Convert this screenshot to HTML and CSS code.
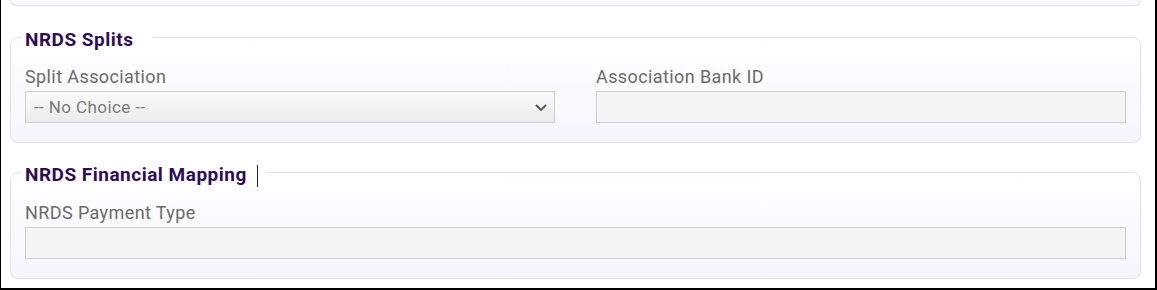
FILE: index.html
```html
<!DOCTYPE html>
<html lang="en">
<head>
  <meta charset="UTF-8" />
  <title>NRDS Settings</title>
  <link rel="stylesheet" href="styles.css">
</head>
<body>
  <div class="frame">
    <div class="card-tail"></div>

    <fieldset class="group">
      <legend>NRDS Splits<span class="caret hidden"></span></legend>
      <div class="row two">
        <div class="field">
          <label for="splitAssoc">Split Association</label>
          <div class="select-wrap">
            <select id="splitAssoc">
              <option>-- No Choice --</option>
            </select>
            <svg class="chevron" width="12" height="7" viewBox="0 0 12 7">
              <path d="M1 1l5 5 5-5" fill="none" stroke="#555" stroke-width="1.8" />
            </svg>
          </div>
        </div>
        <div class="field">
          <label for="bankId">Association Bank ID</label>
          <input type="text" id="bankId" disabled />
        </div>
      </div>
    </fieldset>

    <fieldset class="group second">
      <legend>NRDS Financial Mapping<span class="caret"></span></legend>
      <div class="row">
        <div class="field">
          <label for="paymentType">NRDS Payment Type</label>
          <input type="text" id="paymentType" disabled />
        </div>
      </div>
    </fieldset>
  </div>
</body>
</html>
```

FILE: styles.css
```css
* { box-sizing: border-box; }
html, body {
  margin: 0;
  padding: 0;
  background: #fff;
  font-family: Roboto, "Liberation Sans", Arial, sans-serif;
}
.frame {
  width: 1157px;
  height: 290px;
  border-left: 1px solid #000;
  border-right: 2px solid #000;
  border-bottom: 2px solid #000;
  padding: 0 14px 0 9px;
  overflow: hidden;
}
.card-tail {
  height: 6px;
  border: 1px solid #e2e0ea;
  border-top: none;
  border-radius: 0 0 8px 8px;
  background: #f8f7fd;
  margin-bottom: 19px;
}
.group {
  margin: 0;
  padding: 17px 14px 19px;
  border: 1px solid #e2e0ea;
  border-radius: 8px;
  background: linear-gradient(#ffffff, #f6f5fd);
  min-width: 0;
}
.group.second {
  margin-top: 17px;
  padding-top: 18px;
}
.group legend {
  margin-left: -3px;
  padding: 5px 0 0 3px;
  line-height: 20px;
  font-size: 19px;
  letter-spacing: 0.5px;
  font-weight: bold;
  color: #2d0c5c;
}
.caret {
  display: inline-block;
  vertical-align: top;
  width: 1px;
  height: 22px;
  margin: 0 8px -2px 10px;
  background: #222;
}
.caret.hidden { visibility: hidden; }
.row.two {
  display: grid;
  grid-template-columns: 1fr 1fr;
  column-gap: 41px;
}
.field label {
  display: block;
  font-size: 18px;
  letter-spacing: 0.4px;
  line-height: 20px;
  color: #6b6b6b;
  margin-bottom: 4px;
}
.select-wrap {
  position: relative;
}
.select-wrap select {
  -webkit-appearance: none;
  appearance: none;
  display: block;
  width: 100%;
  height: 32px;
  padding: 0 30px 0 8px;
  border: 1px solid #cfcfcf;
  border-radius: 0;
  background: linear-gradient(#fbfbfb, #ebebeb);
  font-family: inherit;
  font-size: 17px;
  letter-spacing: 0.4px;
  color: #7a7a7a;
}
.chevron {
  position: absolute;
  right: 8px;
  top: 13px;
}
.field input {
  display: block;
  width: 100%;
  height: 32px;
  border: 1px solid #cfcfcf;
  background: #f5f5f5;
  padding: 0 8px;
  font-family: inherit;
  font-size: 16px;
}
```
